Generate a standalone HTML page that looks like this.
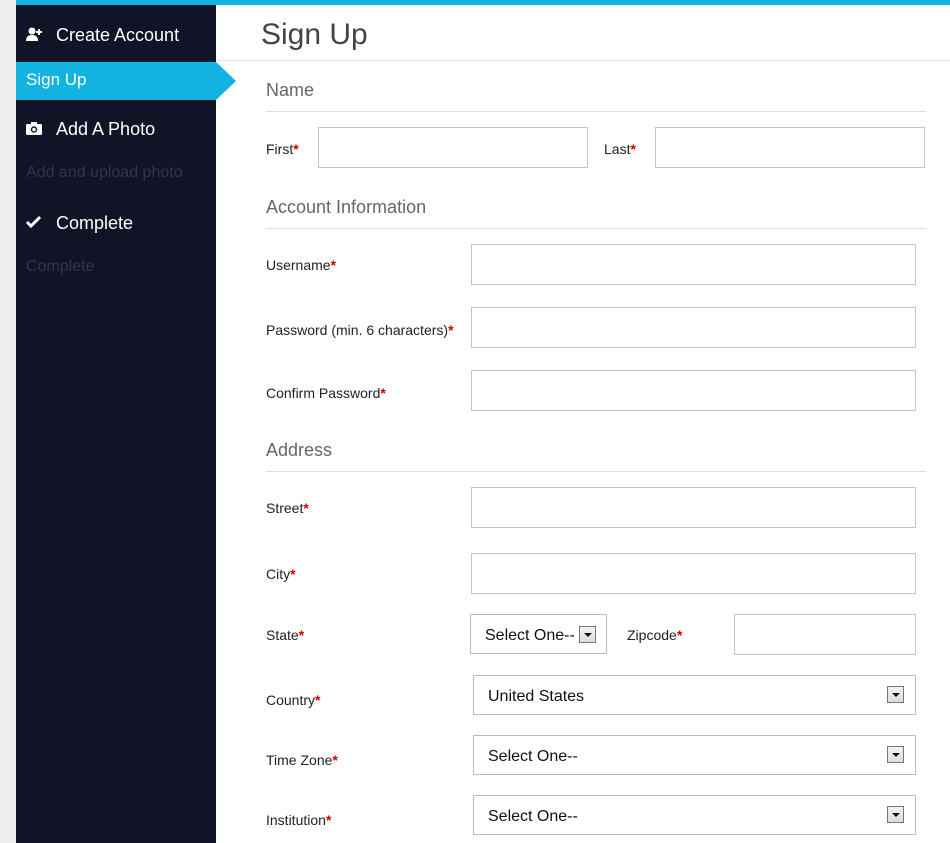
<!DOCTYPE html>
<html><head><style>
*{margin:0;padding:0;box-sizing:border-box}
body{width:950px;height:843px;background:#fff;position:relative;overflow:hidden;font-family:"Liberation Sans",sans-serif}
.a{position:absolute}
.side{left:16px;top:5px;width:200px;height:838px;background:#111427}
.nav{color:#fff;font-size:18px;left:56px}
.sub{color:#2e3752;font-size:16px;left:26px}
.lbl{font-size:14px;color:#222;left:266px;transform:translateY(-50%)}
.lbl b{color:#c00;font-weight:bold}
.in{border:1px solid #c4c4c4;background:#fff;height:41px}
.sec{left:266px;font-size:18px;color:#666}
.ln{left:266px;width:660px;height:1px;background:#ddd}
.sel{border:1px solid #bbb;background:#fff;height:40px;font-size:16px;color:#111;padding-left:14px;line-height:42px}
.arr{position:absolute;right:11px;top:10px;width:17px;height:17px;border:1px solid #777;background:linear-gradient(#f4f4f4,#ddd)}
.arr:after{content:"";position:absolute;left:4px;top:6px;border-left:4px solid transparent;border-right:4px solid transparent;border-top:4px solid #111}
</style></head><body>
<div class="a" style="left:0;top:0;width:16px;height:843px;background:#eeeeee"></div>
<div class="a" style="left:16px;top:0;width:934px;height:5px;background:#12b3e0"></div>
<div class="a side"></div>
<div class="a" style="left:16px;top:62px;width:200px;height:38px;background:#12b3e0"></div>
<div class="a" style="left:216px;top:62px;width:0;height:0;border-top:19px solid transparent;border-bottom:19px solid transparent;border-left:20px solid #12b3e0"></div>
<svg class="a" style="left:26px;top:27px" width="17" height="15" viewBox="0 0 17 15"><circle cx="6" cy="4" r="3.5" fill="#fff"/><path d="M0 14c0-5 3-6 6-6s6 1 6 6z" fill="#fff"/><path d="M13 2v6M10 5h6" stroke="#fff" stroke-width="2"/></svg>
<div class="a nav" style="top:25px">Create Account</div>
<div class="a" style="left:26px;top:70px;color:#fff;font-size:17px">Sign Up</div>
<svg class="a" style="left:26px;top:122px" width="16" height="13" viewBox="0 0 16 13"><rect x="0" y="2" width="16" height="11" rx="1.5" fill="#fff"/><rect x="5" y="0" width="6" height="3" fill="#fff"/><circle cx="8" cy="7.5" r="3.2" fill="#111427"/><circle cx="8" cy="7.5" r="1.8" fill="#fff"/></svg>
<div class="a nav" style="top:119px">Add A Photo</div>
<div class="a sub" style="top:164px">Add and upload photo</div>
<svg class="a" style="left:26px;top:215px" width="16" height="13" viewBox="0 0 16 13"><path d="M1 7l4 4 9-9" stroke="#fff" stroke-width="3" fill="none"/></svg>
<div class="a nav" style="top:213px">Complete</div>
<div class="a sub" style="top:258px">Complete</div>

<div class="a" style="left:261px;top:18px;font-size:30px;color:#444">Sign Up</div>
<div class="a" style="left:216px;top:60px;width:734px;height:1px;background:#ddd"></div>

<div class="a sec" style="top:80px">Name</div><div class="a ln" style="top:111px"></div>
<div class="a lbl" style="top:149px">First<b>*</b></div>
<div class="a in" style="left:318px;top:127px;width:270px"></div>
<div class="a lbl" style="left:604px;top:149px">Last<b>*</b></div>
<div class="a in" style="left:655px;top:127px;width:270px"></div>

<div class="a sec" style="top:197px">Account Information</div><div class="a ln" style="top:228px"></div>
<div class="a lbl" style="top:265px">Username<b>*</b></div>
<div class="a in" style="left:471px;top:244px;width:445px"></div>
<div class="a lbl" style="top:330px">Password (min. 6 characters)<b>*</b></div>
<div class="a in" style="left:471px;top:307px;width:445px"></div>
<div class="a lbl" style="top:393px">Confirm Password<b>*</b></div>
<div class="a in" style="left:471px;top:370px;width:445px"></div>

<div class="a sec" style="top:440px">Address</div><div class="a ln" style="top:471px"></div>
<div class="a lbl" style="top:508px">Street<b>*</b></div>
<div class="a in" style="left:471px;top:487px;width:445px"></div>
<div class="a lbl" style="top:574px">City<b>*</b></div>
<div class="a in" style="left:471px;top:553px;width:445px"></div>
<div class="a lbl" style="top:635px">State<b>*</b></div>
<div class="a sel" style="left:470px;top:614px;width:137px">Select One--<span class="arr" style="right:10px;top:11px"></span></div>
<div class="a lbl" style="left:627px;top:635px">Zipcode<b>*</b></div>
<div class="a in" style="left:734px;top:614px;width:182px"></div>
<div class="a lbl" style="top:700px">Country<b>*</b></div>
<div class="a sel" style="left:473px;top:675px;width:443px">United States<span class="arr"></span></div>
<div class="a lbl" style="top:760px">Time Zone<b>*</b></div>
<div class="a sel" style="left:473px;top:735px;width:443px">Select One--<span class="arr"></span></div>
<div class="a lbl" style="top:820px">Institution<b>*</b></div>
<div class="a sel" style="left:473px;top:795px;width:443px">Select One--<span class="arr"></span></div>
</body></html>
